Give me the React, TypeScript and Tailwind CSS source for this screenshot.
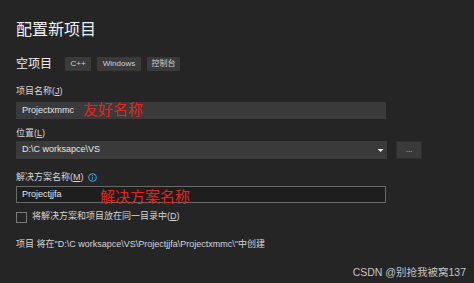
import React from "react"

const font = "font-['Liberation_Sans','Noto_Sans_CJK_SC',sans-serif]"

function Label({ text, hotkey, info }: { text: string; hotkey: string; info?: boolean }) {
  return (
    <div className="flex h-[12px] items-center gap-[4px] text-[9px] leading-[12px] text-[#d6d6d6]">
      <span>
        {text}(<span className="underline">{hotkey}</span>)
      </span>
      {info && (
        <svg width="9" height="9" viewBox="0 0 10 10">
          <circle cx="5" cy="5" r="4.2" fill="none" stroke="#3c9be0" strokeWidth="1.2" />
          <rect x="4.4" y="4.2" width="1.2" height="3.3" fill="#3c9be0" />
          <rect x="4.4" y="2.4" width="1.2" height="1.2" fill="#3c9be0" />
        </svg>
      )}
    </div>
  )
}

export default function App() {
  return (
    <div className={`relative h-[283px] w-[474px] overflow-hidden bg-[#252526] pl-4 ${font}`}>
      <div className="h-px w-full" />
      <div className="mt-[20px] text-[16px] leading-[17px] text-[#f2f2f2]">配置新项目</div>

      <div className="mt-[19px] flex h-[14px] items-center">
        <span className="w-[49px] text-[12px] leading-[14px] text-[#f0f0f0]">空项目</span>
        <div className="flex gap-[6px]">
          <span className="flex h-[14px] w-[26px] items-center justify-center rounded-[1px] bg-[#3a3a3a] text-[8px] text-[#cfcfcf]">C++</span>
          <span className="flex h-[14px] w-[44px] items-center justify-center rounded-[1px] bg-[#3a3a3a] text-[8px] text-[#cfcfcf]">Windows</span>
          <span className="flex h-[14px] w-[33px] items-center justify-center rounded-[1px] bg-[#3a3a3a] text-[8px] text-[#cfcfcf]">控制台</span>
        </div>
      </div>

      <div className="mt-[14px]">
        <Label text="项目名称" hotkey="J" />
      </div>
      <div className="relative mt-[5px] flex h-[17px] w-[370px] items-center bg-[#3a3a3a] pl-[6px] text-[9px] text-[#e6e6e6]">
        Projectxmmc
        <span className="absolute left-[67px] top-[-1px] text-[15px] leading-[17px] text-[#e3241b]">友好名称</span>
      </div>

      <div className="mt-[8px]">
        <Label text="位置" hotkey="L" />
      </div>
      <div className="mt-[2px] flex items-center gap-[9px]">
        <div className="flex h-[18px] w-[371px] items-center justify-between bg-[#3a3a3a] pl-[6px] pr-[3px] text-[9px] text-[#e6e6e6]">
          <span>D:\C worksapce\VS</span>
          <svg width="7" height="5" viewBox="0 0 7 5">
            <path d="M0.5 1 L3.5 4 L6.5 1 Z" fill="#e8e8e8" />
          </svg>
        </div>
        <div className="flex h-[18px] w-[26px] items-center justify-center border border-[#2e2e2e] bg-[#3a3a3a] text-[8px] leading-[8px] text-[#d0d0d0]">
          ...
        </div>
      </div>

      <div className="mt-[12px]">
        <Label text="解决方案名称" hotkey="M" info />
      </div>
      <div className="relative mt-[3px] flex h-[17px] w-[370px] items-center border border-[#6a6a6a] bg-[#1e1e1e] pl-[5px] text-[9px] text-[#e6e6e6]">
        Projectjjfa
        <span className="absolute left-[83px] top-[1px] text-[15px] leading-[17px] text-[#e3241b]">解决方案名称</span>
      </div>

      <div className="mt-[8px] flex h-[12px] items-center gap-[5px] text-[9px] text-[#d6d6d6]">
        <span className="h-[11px] w-[11px] border border-[#7a7a7a]" />
        <span>
          将解决方案和项目放在同一目录中(<span className="underline">D</span>)
        </span>
      </div>

      <div className="mt-[15px] text-[9px] leading-[12px] text-[#d6d6d6]">
        项目 将在"D:\C worksapce\VS\Projectjjfa\Projectxmmc\"中创建
      </div>

      <div className="absolute bottom-[4px] right-[8px] text-[10.5px] leading-[14px] text-[#c4c4c4]">
        CSDN @别抢我被窝137
      </div>
    </div>
  )
}
